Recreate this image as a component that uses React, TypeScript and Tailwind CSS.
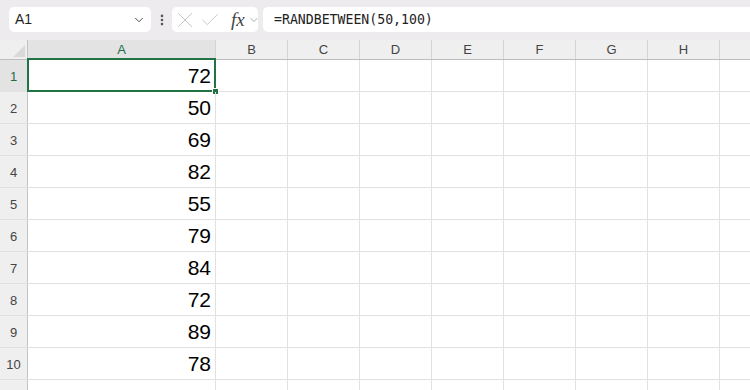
import { X, Check, ChevronDown, EllipsisVertical } from 'lucide-react';

const columns = ['B', 'C', 'D', 'E', 'F', 'G', 'H'];
const values = [72, 50, 69, 82, 55, 79, 84, 72, 89, 78];

export default function App() {
  return (
    <div className="w-[750px] h-[390px] overflow-hidden bg-white font-['Liberation_Sans',Arial,sans-serif] text-[#222]">
      {/* toolbar: name box + formula bar */}
      <div className="h-[40px] bg-[#eeebee] flex items-start pt-[7px] pl-[9px]">
        <div className="w-[142px] h-[25px] bg-white rounded-[5px] flex items-center justify-between pl-[6px] pr-[5px]">
          <span className="text-[14px] text-[#1f1f1f]">A1</span>
          <ChevronDown size={14} strokeWidth={1.6} className="text-[#444]" />
        </div>
        <div className="w-[21px] h-[25px] flex items-center justify-center">
          <EllipsisVertical size={14} strokeWidth={2.5} className="text-[#555]" />
        </div>
        <div className="w-[86px] h-[25px] bg-white rounded-[5px] flex items-center pl-[0px] overflow-hidden">
          <X size={26} strokeWidth={0.9} className="text-[#c4c4c4] shrink-0" />
          <Check size={22} strokeWidth={1} className="text-[#c4c4c4] shrink-0 ml-[1px]" />
          <span className="ml-[10px] font-['Liberation_Serif',serif] italic text-[19px] text-[#444] leading-none">fx</span>
          <ChevronDown size={12} strokeWidth={1.4} className="text-[#888] ml-[3px] shrink-0" />
        </div>
        <div className="ml-[5px] flex-1 h-[25px] bg-white rounded-l-[5px] flex items-center pl-[11px]">
          <span className="font-['DejaVu_Sans_Mono',monospace] text-[13.2px] text-[#222]">=RANDBETWEEN(50,100)</span>
        </div>
      </div>

      {/* column headers */}
      <div className="flex h-[20px] bg-[#efefef] border-b border-[#bdbdbd] text-[13px] text-[#444]">
        <div className="w-[28px] shrink-0 border-r border-[#c4c4c4] relative overflow-hidden">
          <div className="absolute right-[2px] bottom-[2px] w-0 h-0 border-l-[12px] border-l-transparent border-b-[12px] border-b-[#d9d9d9]" />
        </div>
        <div className="w-[188px] shrink-0 bg-[#e3e3e3] border-r border-[#d4d4d4] flex items-center justify-center text-[#1e6b48]">
          A
        </div>
        {columns.map((c) => (
          <div key={c} className="w-[72px] shrink-0 border-r border-[#d4d4d4] flex items-center justify-center">
            {c}
          </div>
        ))}
        <div className="flex-1" />
      </div>

      {/* rows */}
      {[...values, null].map((v, i) => (
        <div key={i} className="flex h-[32px] border-b border-[#e1e1e1]">
          <div
            className={`w-[28px] shrink-0 border-r border-[#c4c4c4] flex items-end justify-center pb-[5px] text-[13px] ${
              i === 0 ? 'bg-[#e3e3e3] text-[#1e6b48]' : 'bg-[#efefef] text-[#444]'
            }`}
          >
            {i + 1}
          </div>
          <div className="w-[188px] shrink-0 border-r border-[#e1e1e1] relative flex items-end justify-end pr-[4px] pb-[5px] text-[21px] leading-none text-black">
            {v}
            {i === 0 && (
              <>
                <div className="absolute -left-[1px] -top-[2px] -right-[1px] -bottom-[1px] border-2 border-[#217346]" />
                <div className="absolute -right-[4px] -bottom-[4px] w-[7px] h-[7px] bg-[#217346] border border-white" />
              </>
            )}
          </div>
          {columns.map((c) => (
            <div key={c} className="w-[72px] shrink-0 border-r border-[#e1e1e1]" />
          ))}
          <div className="flex-1" />
        </div>
      ))}
    </div>
  );
}
